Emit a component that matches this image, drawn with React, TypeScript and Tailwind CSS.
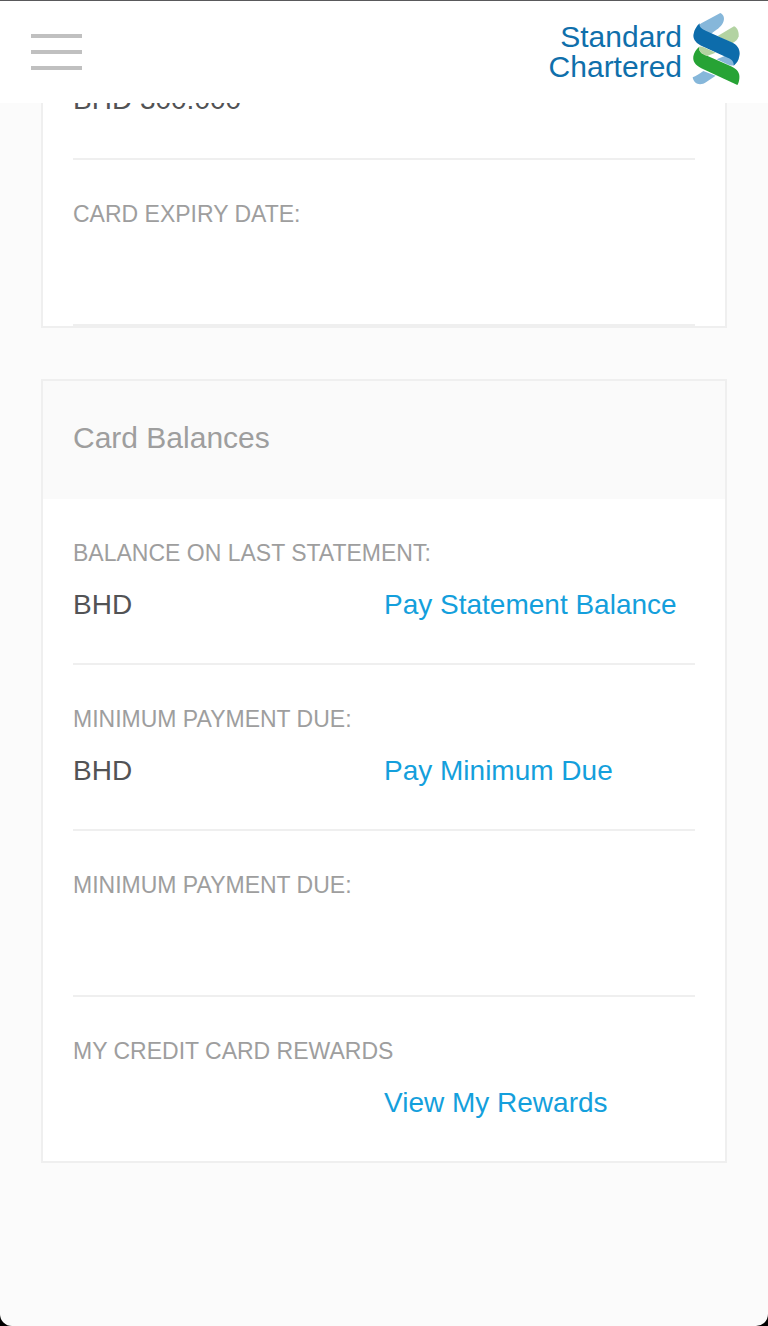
import { useState, type ReactNode } from 'react';

interface RowProps {
  label?: string;
  value?: string;
  action?: string;
  className?: string;
}

const balances: RowProps[] = [
  { label: 'BALANCE ON LAST STATEMENT:', value: 'BHD', action: 'Pay Statement Balance' },
  { label: 'MINIMUM PAYMENT DUE:', value: 'BHD', action: 'Pay Minimum Due' },
  { label: 'MINIMUM PAYMENT DUE:' },
  { label: 'MY CREDIT CARD REWARDS', action: 'View My Rewards' },
];

const Logo = () => (
  <a href="#" className="mb-1.5 flex items-center gap-2.5 text-[#0f6fab]">
    <span className="pt-1.5 text-right text-[30px] leading-[30px]">
      Standard
      <br />
      Chartered
    </span>
    <svg viewBox="36 21 144 222" className="h-[74px] w-12" aria-hidden="true">
      <path
        d="M121 24 C132 29 135 42 129 53 C122 68 108 74 94 86 L70 84 L56 60 C62 56 68 53 75 49 Z"
        fill="#86b7da"
      />
      <path d="M113 93 L162 64 C172 68 177 80 176 94 C174 103 167 110 157 115 Z" fill="#b3d3a2" />
      <path d="M118 138 L150 138 L168 158 L162 181 C154 183 147 180 139 176 L110 163 L134 153 Z" fill="#86b7da" />
      <path d="M70 198 L107 212 L79 231 C62 243 42 239 38 217 C47 214 59 206 70 198 Z" fill="#86b7da" />
      <path
        d="M59 55 C57 66 65 71 77 77 L155 112 C174 121 182 136 178 153 C176 167 170 175 161 182 C162 169 155 163 143 158 L67 124 C47 115 37 101 41 86 C43 75 49 64 59 55 Z"
        fill="#0d6cab"
      />
      <path
        d="M57 126 C57 139 63 145 76 150 L153 184 C173 193 180 205 178 221 C177 230 175 236 172 240 L64 190 C46 181 38 170 40 154 C42 143 48 133 57 126 Z"
        fill="#27a335"
      />
      <path d="M57 126 C62 122 74 128 107 143 L81 153 C64 147 56 139 57 126 Z" fill="#b3d3a2" />
    </svg>
  </a>
);

const Row = ({ label, value, action, className = 'pt-10' }: RowProps) => (
  <div className={`border-b-2 border-[#efefef] pb-[38px] last:border-b-0 ${className}`}>
    {label && <h3 className="mb-[18px] text-[23px] leading-7 text-[#9e9e9e]">{label}</h3>}
    <div className="grid min-h-10 grid-cols-2 text-[28px] leading-10">
      <span className="text-[#525355]">{value}</span>
      {action && (
        <a href="#" className="whitespace-nowrap text-[#149fdc]">
          {action}
        </a>
      )}
    </div>
  </div>
);

const Card = ({ title, children }: { title: string; children: ReactNode }) => (
  <section className="border-2 border-[#efefef] bg-white">
    <h2 className="bg-[#fafafa] px-[30px] pt-9 pb-10 text-[30px] leading-[42px] text-[#9e9e9e]">{title}</h2>
    <div className="px-[30px]">{children}</div>
  </section>
);

const App = () => {
  const [menuOpen, setMenuOpen] = useState(false);

  return (
    <div className="min-h-screen bg-black font-['Liberation_Sans',Arial,sans-serif]">
      <header className="fixed inset-x-0 top-0 z-10 flex h-[103px] items-center justify-between border-t border-[#59595b] bg-white pr-7 pl-[31px]">
        <button
          type="button"
          aria-label="Menu"
          aria-expanded={menuOpen}
          onClick={() => setMenuOpen(!menuOpen)}
          className="flex w-[51px] cursor-pointer flex-col gap-3"
        >
          <span className="h-1 bg-[#c0c0c0]" />
          <span className="h-1 bg-[#c0c0c0]" />
          <span className="h-1 bg-[#c0c0c0]" />
        </button>
        <Logo />
      </header>

      <main className="flex min-h-screen flex-col gap-[51px] rounded-b-xl bg-[#fbfbfb] px-[41px]">
        {/* top of this card is scrolled under the header */}
        <section className="border-2 border-t-0 border-[#efefef] bg-white px-[30px]">
          <Row value="BHD 300.000" className="pt-20" />
          <div className="border-b-2 border-[#efefef]">
            <Row label="CARD EXPIRY DATE:" />
          </div>
        </section>

        <Card title="Card Balances">
          {balances.map((row, i) => (
            <Row key={i} {...row} />
          ))}
        </Card>
      </main>
    </div>
  );
};

export default App;
